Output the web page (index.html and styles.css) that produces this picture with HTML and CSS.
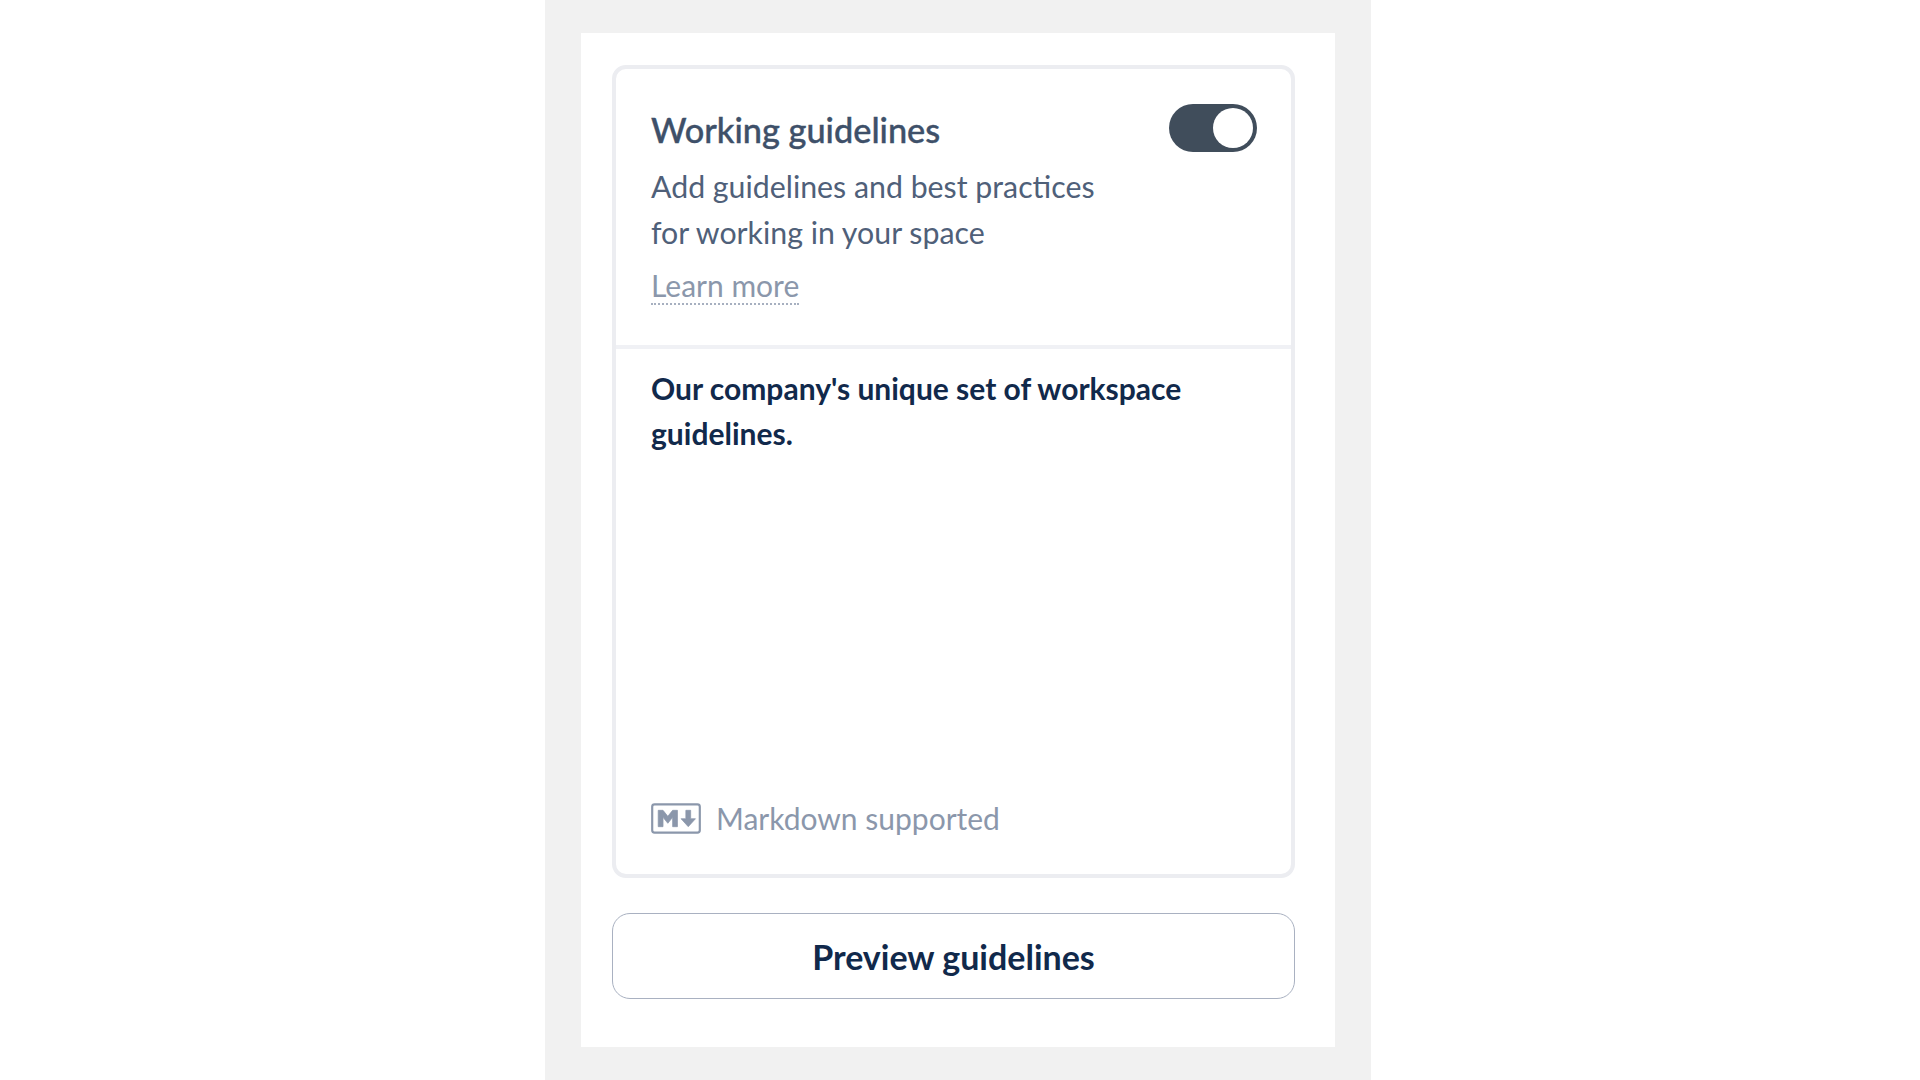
FILE: index.html
```html
<!DOCTYPE html>
<html lang="en">
<head>
<meta charset="utf-8">
<title>Working guidelines</title>
<link rel="stylesheet" href="styles.css">
</head>
<body>
<main class="panel">
  <section class="sheet">
    <div class="card">
      <header class="card-head">
        <div class="head-text">
          <h2 class="title">Working guidelines</h2>
          <p class="desc">Add guidelines and best practices<br>for working in your space</p>
          <a class="learn" href="#">Learn more</a>
        </div>
        <span class="toggle"><span class="knob"></span></span>
      </header>
      <div class="card-body">
        <p class="guidelines">Our company's unique set of workspace<br>guidelines.</p>
        <div class="md-note">
          <svg class="md-icon" viewBox="0 0 208 128" aria-hidden="true">
            <rect class="md-frame" x="5" y="5" width="198" height="118" rx="10"></rect>
            <path class="md-glyph" d="M30 98V30h20l20 25 20-25h20v68H90V59L70 84 50 59v39zm125 0l-30-33h20V30h20v35h20z"></path>
          </svg>
          <span>Markdown supported</span>
        </div>
      </div>
    </div>
    <button class="preview" type="button">Preview guidelines</button>
  </section>
</main>
</body>
</html>
```

FILE: styles.css
```css
* { box-sizing: border-box; }
html, body { margin: 0; height: 100%; background: #fff; }
body {
  display: flex;
  justify-content: center;
  font-family: Lato, "Noto Sans", sans-serif;
  overflow: hidden;
}
.panel {
  width: 826px;
  height: 1080px;
  margin-right: 4px;
  padding: 33px 36px;
  background: #f1f1f1;
}
.sheet {
  height: 1014px;
  padding: 32px 40px 32px 31px;
  background: #fff;
}
.card {
  display: flex;
  flex-direction: column;
  height: 813px;
  border: 4px solid #ecedf1;
  border-radius: 14px;
}
.card-head {
  display: flex;
  justify-content: space-between;
  align-items: flex-start;
  height: 280px;
  padding: 34px 34px 0 35px;
  border-bottom: 4px solid #f0f1f5;
}
.title {
  margin: 3px 0 0;
  font-size: 34.3px;
  line-height: 48px;
  font-weight: 500;
  color: #3e5069;
  -webkit-text-stroke: 0.4px #3e5069;
}
.desc {
  margin: 9px 0 0;
  font-size: 30.3px;
  line-height: 46px;
  color: #4f6079;
}
.learn {
  display: inline-block;
  margin-top: 12px;
  font-size: 30px;
  line-height: 36px;
  color: #8b97ab;
  text-decoration: none;
  border-bottom: 2px dotted #a7b0c0;
}
.toggle {
  display: flex;
  justify-content: flex-end;
  flex: none;
  width: 88px;
  height: 48px;
  margin-top: 1px;
  padding: 4px;
  border-radius: 24px;
  background: #404d5b;
}
.knob {
  width: 40px;
  height: 40px;
  border-radius: 50%;
  background: #fff;
}
.card-body {
  flex: 1;
  display: flex;
  flex-direction: column;
  justify-content: space-between;
  padding: 17px 33px 37px 35px;
}
.guidelines {
  margin: 0;
  font-size: 30px;
  line-height: 45px;
  font-weight: 700;
  color: #11294b;
}
.md-note {
  display: flex;
  align-items: center;
  gap: 15px;
  font-size: 30px;
  line-height: 38px;
  color: #8b97ab;
}
.md-icon { width: 50px; height: 31px; flex: none; }
.md-frame { fill: none; stroke: #8b97ab; stroke-width: 9; }
.md-glyph { fill: #8b97ab; stroke: #8b97ab; stroke-width: 3; }
.preview {
  display: block;
  width: 100%;
  height: 86px;
  margin-top: 35px;
  padding: 0;
  border: 1.5px solid #a9b1c1;
  border-radius: 18px;
  background: #fff;
  font: 700 34px Lato, "Noto Sans", sans-serif;
  color: #11294b;
}
```
